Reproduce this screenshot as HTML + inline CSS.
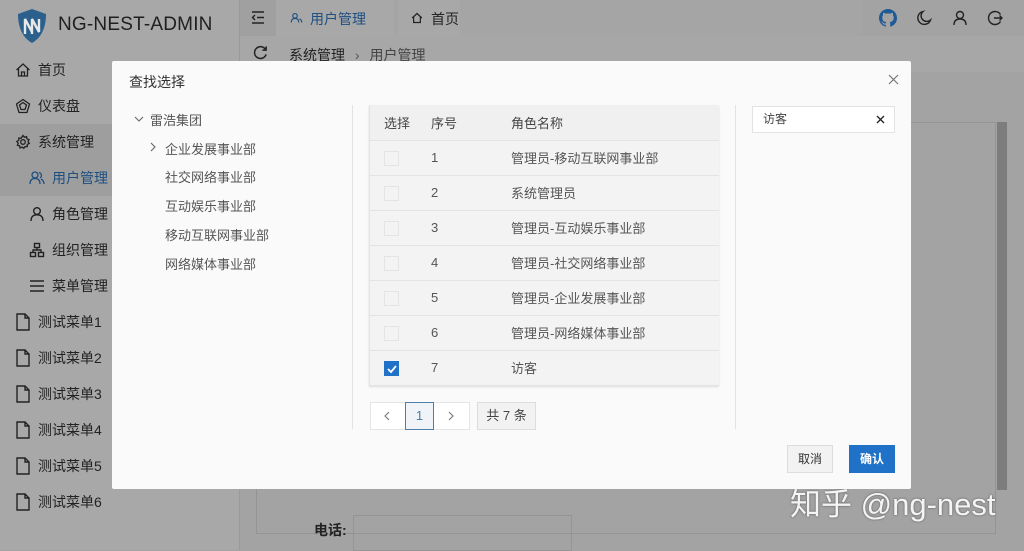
<!DOCTYPE html>
<html><head><meta charset="utf-8"><style>
*{box-sizing:border-box;margin:0;padding:0}
body{width:1024px;height:550px;overflow:hidden;position:relative;background:#a3a3a3;font-family:"Liberation Sans","Noto Sans CJK SC",sans-serif;font-size:14px;color:#333}
.abs{position:absolute}
.side{left:0;top:0;width:240px;height:550px;background:#a8a8a8;border-right:1px solid #9a9a9a}
.logo{left:16px;top:8px}
.brand{left:58px;top:14px;font-size:19px;color:#1f1f1f;letter-spacing:.2px}
.mi{position:absolute;left:0;width:240px;height:36px;line-height:36px;color:#222;font-size:14px}
.mi svg{position:absolute;top:10px}
.mi span{position:absolute}
.top{left:240px;top:0;width:784px;height:36px;background:#a5a5a5}
.bc{left:240px;top:36px;width:784px;height:36px;background:#a7a7a7}
.modal{left:112px;top:61px;width:799px;height:428px;background:#fafafa;border-radius:2px}
.tr{position:absolute;font-size:13px;color:#555}
table{border-collapse:collapse;position:absolute;left:258px;top:44px;width:349px;font-size:13px;color:#555;table-layout:fixed}
td,th{height:35px;border-bottom:1px solid #e3e3e3;text-align:left;font-weight:normal}
th{background:#f0f0f0;color:#444;height:35px}
tr.b td{background:#f3f3f3}
.cb{display:inline-block;width:15px;height:15px;border:1px solid #e4e4e4;background:#f3f3f3;vertical-align:middle}
.btn{position:absolute;height:28px;line-height:26px;font-size:12px;text-align:center;border:1px solid #ddd;background:#f2f2f2;color:#333}
</style></head><body>
<div class="abs side"></div>
<svg class="abs logo" width="32" height="36" viewBox="0 0 32 36"><path d="M16 1 L30 6 C30 20 25 30 16 35 C7 30 2 20 2 6 Z" fill="#2b5f8c"/><path d="M9 26 V11 L16 24 V11 M16 26 V11 L23 24 V11" stroke="#e8e8e8" stroke-width="2.4" fill="none"/></svg>
<div class="abs brand">NG-NEST-ADMIN</div>
<div class="abs" style="left:0;top:124px;width:240px;height:72px;background:#9e9e9e"></div>
<div class="mi" style="top:52px"><svg width="16" height="16" style="left:15px" viewBox="0 0 16 16" fill="none" stroke="#222" stroke-width="1.3"><path d="M1.5 8 L8 2 L14.5 8 M3.5 6.5 V14 H12.5 V6.5 M6.5 14 V10 H9.5 V14"/></svg><span style="left:38px">首页</span></div>
<div class="mi" style="top:88px"><svg width="16" height="16" style="left:15px" viewBox="0 0 16 16" fill="none" stroke="#222" stroke-width="1.3"><path d="M8 1.5 L14.5 6 L12 14.5 H4 L1.5 6 Z M8 4.5 L11.5 7 L10 11.5 H6 L4.5 7 Z"/></svg><span style="left:38px">仪表盘</span></div>
<div class="mi" style="top:124px"><svg width="16" height="16" style="left:15px" viewBox="0 0 16 16" fill="none" stroke="#222" stroke-width="1.3"><circle cx="8" cy="8" r="2.3"/><path d="M8 1.5 L9.3 3.2 L11.5 2.6 L11.9 4.8 L14 5.6 L13 7.6 L14.3 9.4 L12.3 10.4 L12.3 12.6 L10.1 12.5 L8.8 14.3 L7.2 13 L5 14 L4.6 11.8 L2.4 11.3 L3.2 9.2 L1.8 7.4 L3.8 6.3 L3.8 4.1 L6 4.3 Z"/></svg><span style="left:38px">系统管理</span></div>
<div class="mi" style="top:160px;color:#1e4f80"><svg width="16" height="16" style="left:29px" viewBox="0 0 16 16" fill="none" stroke="#1e4f80" stroke-width="1.3"><circle cx="6" cy="5" r="3"/><path d="M1 14 C1 10 3 8.5 6 8.5 C9 8.5 11 10 11 14 M10 2.5 A3 3 0 0 1 11 8 M12 9 C14 10 15 12 15 14"/></svg><span style="left:52px">用户管理</span></div>
<div class="mi" style="top:196px"><svg width="16" height="16" style="left:29px" viewBox="0 0 16 16" fill="none" stroke="#222" stroke-width="1.4"><circle cx="8" cy="5" r="3.3"/><path d="M2 15 C2 10.5 4.5 8.8 8 8.8 C11.5 8.8 14 10.5 14 15"/></svg><span style="left:52px">角色管理</span></div>
<div class="mi" style="top:232px"><svg width="16" height="16" style="left:29px" viewBox="0 0 16 16" fill="none" stroke="#222" stroke-width="1.4"><rect x="5.5" y="1.5" width="5" height="4"/><rect x="1.5" y="10.5" width="5" height="4"/><rect x="9.5" y="10.5" width="5" height="4"/><path d="M8 5.5 V8 M4 10.5 V8 H12 V10.5"/></svg><span style="left:52px">组织管理</span></div>
<div class="mi" style="top:268px"><svg width="16" height="16" style="left:29px" viewBox="0 0 16 16" fill="none" stroke="#222" stroke-width="1.4"><path d="M1 3 H15 M1 8 H15 M1 13 H15"/></svg><span style="left:52px">菜单管理</span></div>
<div class="mi" style="top:304px"><svg width="16" height="18" style="left:15px;top:9px" viewBox="0 0 16 18" fill="none" stroke="#222" stroke-width="1.4"><path d="M2 1 H10 L14 5 V17 H2 Z M10 1 V5 H14"/></svg><span style="left:38px">测试菜单1</span></div>
<div class="mi" style="top:340px"><svg width="16" height="18" style="left:15px;top:9px" viewBox="0 0 16 18" fill="none" stroke="#222" stroke-width="1.4"><path d="M2 1 H10 L14 5 V17 H2 Z M10 1 V5 H14"/></svg><span style="left:38px">测试菜单2</span></div>
<div class="mi" style="top:376px"><svg width="16" height="18" style="left:15px;top:9px" viewBox="0 0 16 18" fill="none" stroke="#222" stroke-width="1.4"><path d="M2 1 H10 L14 5 V17 H2 Z M10 1 V5 H14"/></svg><span style="left:38px">测试菜单3</span></div>
<div class="mi" style="top:412px"><svg width="16" height="18" style="left:15px;top:9px" viewBox="0 0 16 18" fill="none" stroke="#222" stroke-width="1.4"><path d="M2 1 H10 L14 5 V17 H2 Z M10 1 V5 H14"/></svg><span style="left:38px">测试菜单4</span></div>
<div class="mi" style="top:448px"><svg width="16" height="18" style="left:15px;top:9px" viewBox="0 0 16 18" fill="none" stroke="#222" stroke-width="1.4"><path d="M2 1 H10 L14 5 V17 H2 Z M10 1 V5 H14"/></svg><span style="left:38px">测试菜单5</span></div>
<div class="mi" style="top:484px"><svg width="16" height="18" style="left:15px;top:9px" viewBox="0 0 16 18" fill="none" stroke="#222" stroke-width="1.4"><path d="M2 1 H10 L14 5 V17 H2 Z M10 1 V5 H14"/></svg><span style="left:38px">测试菜单6</span></div>

<div class="abs top"></div>
<div class="abs" style="left:240px;top:0;width:36px;height:36px;background:#a0a0a0"></div>
<svg class="abs" style="left:251px;top:11px" width="14" height="13" viewBox="0 0 14 13" fill="none" stroke="#222" stroke-width="1.4"><path d="M1 1 H13 M6 6.5 H13 M1 12 H13 M4 4 L1.5 6.5 L4 9"/></svg>
<div class="abs" style="left:276px;top:0;width:118px;height:36px;background:#a8a8a8"></div>
<svg class="abs" style="left:290px;top:12px" width="13" height="12" viewBox="0 0 16 16" fill="none" stroke="#1e4f80" stroke-width="1.5"><circle cx="6" cy="5" r="3"/><path d="M1 14 C1 10 3 8.5 6 8.5 C9 8.5 11 10 11 14 M12 9 C14 10 15 12 15 14"/></svg>
<div class="abs" style="left:310px;top:9px;color:#1e4f80;font-size:14px">用户管理</div>
<div class="abs" style="left:398px;top:0;width:62px;height:36px;background:#a8a8a8"></div>
<svg class="abs" style="left:411px;top:12px" width="12" height="12" viewBox="0 0 16 16" fill="none" stroke="#222" stroke-width="1.6"><path d="M1.5 8 L8 2 L14.5 8 M3.5 6.5 V14 H12.5 V6.5"/></svg>
<div class="abs" style="left:431px;top:9px;color:#222">首页</div>
<div class="abs" style="left:862px;top:0;width:162px;height:36px;background:#a3a3a3"></div>
<svg class="abs" style="left:879px;top:9px" width="18" height="18" viewBox="0 0 16 16"><path fill="#1e5a96" d="M8 0C3.58 0 0 3.580 0 8c0 3.54 2.290 6.53 5.47 7.59.4.07.55-.17.55-.38v-1.33c-2.23.48-2.7-1.07-2.7-1.070-.36-.92-.89-1.17-.89-1.17-.73-.5.05-.49.05-.49.8.06 1.23.83 1.23.83.71 1.22 1.87.87 2.33.66.07-.52.28-.87.5-1.07-1.78-.2-3.64-.89-3.64-3.95 0-.87.31-1.59.82-2.15-.08-.2-.36-1.02.08-2.12 0 0 .67-.21 2.2.82a7.6 7.6 0 014 0c1.53-1.04 2.2-.82 2.2-.82.44 1.1.16 1.92.08 2.12.51.56.82 1.27.82 2.15 0 3.07-1.87 3.75-3.65 3.95.29.25.54.73.54 1.48v2.2c0 .21.15.46.55.38A8.01 8.01 0 0016 8c0-4.42-3.58-8-8-8z"/></svg>
<svg class="abs" style="left:916px;top:10px" width="16" height="16" viewBox="0 0 16 16" fill="none" stroke="#222" stroke-width="1.4"><path d="M7 1.5 A6.5 6.5 0 1 0 14.5 10 A5.5 5.5 0 0 1 7 1.5 Z"/></svg>
<svg class="abs" style="left:952px;top:10px" width="16" height="16" viewBox="0 0 16 16" fill="none" stroke="#222" stroke-width="1.4"><circle cx="8" cy="5" r="3.5"/><path d="M2 15 C2 10.5 4.5 9 8 9 C11.5 9 14 10.5 14 15"/></svg>
<svg class="abs" style="left:987px;top:10px" width="16" height="16" viewBox="0 0 16 16" fill="none" stroke="#222" stroke-width="1.4"><path d="M13.5 4.5 A6.5 6.5 0 1 0 13.5 11.5 M7 8 H15 M12.5 5.5 L15 8 L12.5 10.5"/></svg>

<div class="abs bc"></div>
<svg class="abs" style="left:253px;top:45px" width="15" height="15" viewBox="0 0 16 16" fill="none" stroke="#222" stroke-width="1.6"><path d="M13.5 5 A6.3 6.3 0 1 0 14 10 M14 1.5 V5.5 H10"/></svg>
<div class="abs" style="left:289px;top:45px;color:#222">系统管理 <span style="color:#555;margin:0 6px">›</span> <span style="color:#444">用户管理</span></div>

<div class="abs" style="left:256px;top:122px;width:740px;height:412px;border:1px solid #949494"></div>
<div class="abs" style="left:997px;top:122px;width:10px;height:368px;background:#7d7d7d"></div>
<div class="abs" style="left:314px;top:520px;font-weight:bold;color:#222">电话:</div>
<div class="abs" style="left:353px;top:515px;width:219px;height:36px;border:1px solid #959595"></div>
<div class="abs" style="left:790px;top:479px;font-size:31px;color:#f4f4f4;text-shadow:0 0 2px #555">知乎 @ng-nest</div>

<div class="abs modal">
  <div class="abs" style="left:17px;top:11px;font-size:14px;color:#333">查找选择</div>
  <svg class="abs" style="left:776px;top:13px" width="11" height="11" viewBox="0 0 11 11" stroke="#777" stroke-width="1.2"><path d="M1 1 L10 10 M10 1 L1 10"/></svg>
  <svg class="abs" style="left:22px;top:54px" width="10" height="8" viewBox="0 0 10 8" fill="none" stroke="#666" stroke-width="1.1"><path d="M1 2 L5 6 L9 2"/></svg>
  <div class="tr" style="left:38px;top:49px">雷浩集团</div>
  <svg class="abs" style="left:37px;top:81px" width="8" height="10" viewBox="0 0 8 10" fill="none" stroke="#666" stroke-width="1.1"><path d="M2 1 L6 5 L2 9"/></svg>
  <div class="tr" style="left:53px;top:78px">企业发展事业部</div>
  <div class="tr" style="left:53px;top:106px">社交网络事业部</div>
  <div class="tr" style="left:53px;top:135px">互动娱乐事业部</div>
  <div class="tr" style="left:53px;top:164px">移动互联网事业部</div>
  <div class="tr" style="left:53px;top:193px">网络媒体事业部</div>
  <div class="abs" style="left:240px;top:44px;width:1px;height:324px;background:#e2e2e2"></div>
  <div class="abs" style="left:623px;top:44px;width:1px;height:324px;background:#e2e2e2"></div>
  <div class="abs" style="left:257px;top:44px;width:350px;height:281px;border:1px solid #e3e3e3;box-shadow:0 1px 2px rgba(0,0,0,.12)"></div>
  <table>
    <tr><th style="padding-left:14px;width:61px">选择</th><th style="width:80px">序号</th><th>角色名称</th></tr>
    <tr class="b"><td style="padding-left:14px"><span class="cb"></span></td><td>1</td><td>管理员-移动互联网事业部</td></tr>
    <tr class="b"><td style="padding-left:14px"><span class="cb"></span></td><td>2</td><td>系统管理员</td></tr>
    <tr class="b"><td style="padding-left:14px"><span class="cb"></span></td><td>3</td><td>管理员-互动娱乐事业部</td></tr>
    <tr class="b"><td style="padding-left:14px"><span class="cb"></span></td><td>4</td><td>管理员-社交网络事业部</td></tr>
    <tr class="b"><td style="padding-left:14px"><span class="cb"></span></td><td>5</td><td>管理员-企业发展事业部</td></tr>
    <tr class="b"><td style="padding-left:14px"><span class="cb"></span></td><td>6</td><td>管理员-网络媒体事业部</td></tr>
    <tr class="b"><td style="padding-left:14px"><span class="cb" style="background:#1f72c8;border-color:#1f72c8;position:relative"><svg style="position:absolute;left:1px;top:1px" width="12" height="12" viewBox="0 0 12 12" fill="none" stroke="#fff" stroke-width="1.8"><path d="M2 6 L5 9 L10 3"/></svg></span></td><td>7</td><td>访客</td></tr>
  </table>
  <div class="abs" style="left:258px;top:341px;width:100px;height:28px;border:1px solid #e5e5e5;background:#fff"></div>
  <svg class="abs" style="left:272px;top:350px" width="6" height="10" viewBox="0 0 6 10" fill="none" stroke="#777" stroke-width="1.1"><path d="M5 1 L1 5 L5 9"/></svg>
  <div class="abs" style="left:293px;top:341px;width:29px;height:28px;border:1px solid #4b7fa8;background:#f0f4f8;color:#4b7fa8;text-align:center;line-height:26px;font-size:13px">1</div>
  <svg class="abs" style="left:336px;top:350px" width="6" height="10" viewBox="0 0 6 10" fill="none" stroke="#777" stroke-width="1.1"><path d="M1 1 L5 5 L1 9"/></svg>
  <div class="btn" style="left:365px;top:341px;width:59px;color:#444;font-size:13px">共 7 条</div>
  <div class="abs" style="left:640px;top:45px;width:143px;height:27px;border:1px solid #e3e3e3;background:#fff;font-size:12px;line-height:25px;padding-left:10px;color:#444">访客<svg style="position:absolute;right:9px;top:8px" width="9" height="9" viewBox="0 0 9 9" stroke="#222" stroke-width="1.3"><path d="M1 1 L8 8 M8 1 L1 8"/></svg></div>
  <div class="btn" style="left:675px;top:384px;width:46px">取消</div>
  <div class="btn" style="left:737px;top:384px;width:46px;background:#1f72c8;border-color:#1f72c8;color:#fff;font-weight:bold">确认</div>
</div>
</body></html>
